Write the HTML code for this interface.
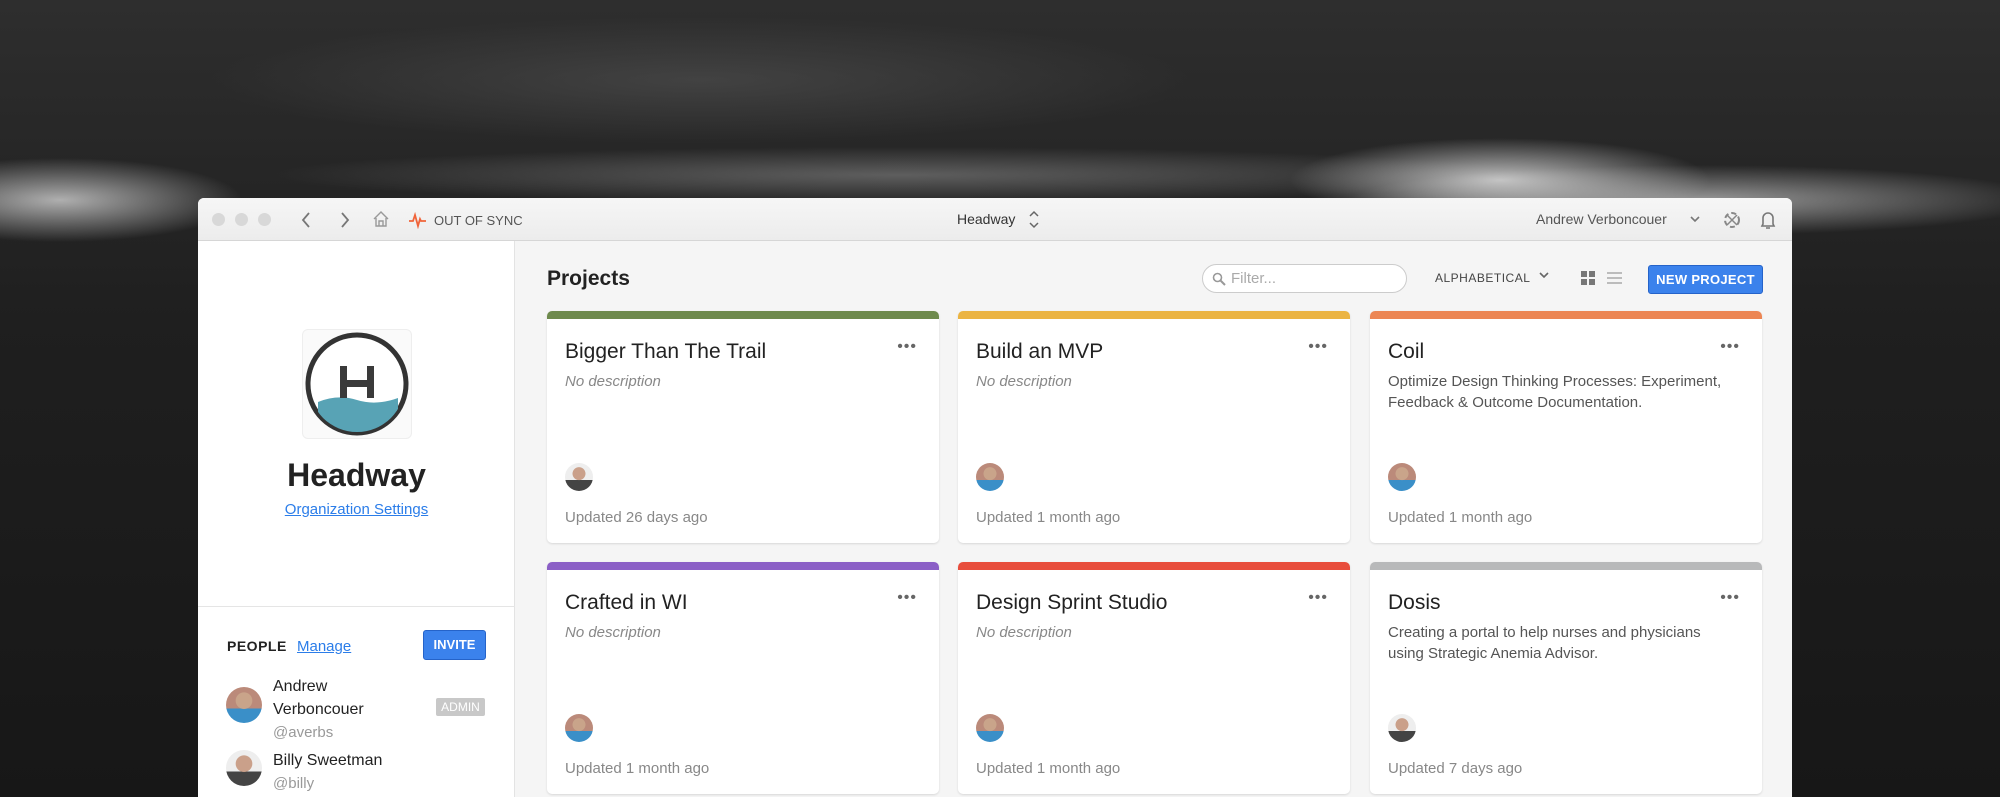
<!DOCTYPE html>
<html style="width:2000px;height:797px;overflow:hidden"><head><meta charset="utf-8"><style>
*{box-sizing:border-box;margin:0;padding:0}
body{width:2000px;height:797px;overflow:hidden;font-family:"Liberation Sans",sans-serif;position:relative;
background:
radial-gradient(ellipse 300px 60px at 1500px 180px,rgba(220,220,220,.85),transparent 70%),
radial-gradient(ellipse 500px 50px at 1700px 200px,rgba(200,200,200,.7),transparent 70%),
radial-gradient(ellipse 260px 60px at 60px 200px,rgba(210,210,210,.8),transparent 70%),
radial-gradient(ellipse 900px 40px at 900px 175px,rgba(150,150,150,.5),transparent 70%),
radial-gradient(ellipse 700px 90px at 700px 80px,rgba(90,90,90,.5),transparent 70%),
linear-gradient(#2e2e2e,#1f1f1f 40%,#171717);}
.a{position:absolute}
.win{left:198px;top:198px;width:1594px;height:599px;background:#f5f5f5;border-radius:6px 6px 0 0;overflow:hidden}
.tb{left:0;top:0;width:100%;height:43px;background:linear-gradient(#f6f6f6,#ececec);border-bottom:1px solid #d6d6d6}
.tl{width:13px;height:13px;border-radius:50%;background:#d8d8d8;top:15px}
.tbt{font-size:14px;color:#444;top:13px}
.side{left:0;top:43px;width:317px;height:556px;background:#fff;border-right:1px solid #e3e3e3}
.card{width:392px;background:#fff;border-radius:5px;box-shadow:0 1px 2px rgba(0,0,0,.12);overflow:hidden}
.bar{height:8px}
.ct{left:18px;top:29px;font-size:21px;color:#222}
.cd{left:18px;top:62px;font-size:15px;color:#888;font-style:italic}
.cdn{left:18px;top:60px;font-size:15px;color:#555;line-height:21px;width:350px}
.dots{right:22px;top:27px;font-size:16px;color:#666;letter-spacing:1px}
.av{left:18px;top:152px;width:28px;height:28px;border-radius:50%;background:radial-gradient(circle at 50% 38%,#c9a48a 0 28%,transparent 30%),linear-gradient(#bb8a7a 60%,#3a8fc8 60%)}
.av2{background:radial-gradient(circle at 50% 38%,#caa08a 0 28%,transparent 30%),linear-gradient(#eee 60%,#444 60%)}
.up{left:18px;top:198px;font-size:15px;color:#888}
</style></head><body>
<div class="a win">
 <div class="a tb">
  <div class="a tl" style="left:14px"></div><div class="a tl" style="left:37px"></div><div class="a tl" style="left:60px"></div>
  <svg class="a" style="left:102px;top:13px" width="60" height="18"><path d="M9 2 3 9l6 7M42 2l6 7-6 7" stroke="#777" stroke-width="1.8" fill="none"/></svg>
  <svg class="a" style="left:174px;top:12px" width="18" height="18"><path d="M2 9 9 2l7 7M4 8v8h10V8M7 16v-5h4v5" stroke="#999" stroke-width="1.4" fill="none"/></svg>
  <svg class="a" style="left:210px;top:13px" width="20" height="18"><path d="M1 10h4l2-6 3 11 2-7 1 2h5" stroke="#f0643a" stroke-width="1.8" fill="none"/></svg>
  <div class="a tbt" style="left:236px;font-size:13px;color:#555;top:15px">OUT OF SYNC</div>
  <div class="a tbt" style="left:759px;color:#333">Headway</div>
  <svg class="a" style="left:830px;top:11px" width="12" height="22"><path d="M2 7l4-4 4 4M2 14l4 4 4-4" stroke="#666" stroke-width="1.5" fill="none"/></svg>
  <div class="a tbt" style="left:1338px;color:#555">Andrew Verboncouer</div>
  <svg class="a" style="left:1491px;top:17px" width="12" height="10"><path d="M2 2l4 4 4-4" stroke="#777" stroke-width="1.6" fill="none"/></svg>
  <svg class="a" style="left:1524px;top:12px" width="20" height="20"><circle cx="10" cy="10" r="7" stroke="#888" stroke-width="2" fill="none" stroke-dasharray="5 3"/><path d="M5 5l10 10M15 5 5 15" stroke="#888" stroke-width="1.5"/></svg>
  <svg class="a" style="left:1562px;top:11px" width="16" height="22"><path d="M3 15V9a5 5 0 0 1 10 0v6l1 2H2z M6 19h4" stroke="#777" stroke-width="1.6" fill="none"/></svg>
 </div>
 <div class="a side">
  <div class="a" style="left:104px;top:88px;width:110px;height:110px;border:1px solid #eee;border-radius:6px;background:#fafafa">
   <svg width="108" height="108"><defs><clipPath id="c"><circle cx="54" cy="54" r="48"/></clipPath></defs><circle cx="54" cy="54" r="49" fill="#fff" stroke="#333" stroke-width="5"/><path clip-path="url(#c)" d="M15 72 Q35 64 54 70 T95 68 L95 110 15 110z" fill="#58a3b5"/><path d="M37 36h7v14h20V36h7v32h-7V57H44v11h-7z" fill="#3a3a3a"/></svg>
  </div>
  <div class="a" style="left:0;width:317px;text-align:center;top:216px;font-size:32px;font-weight:bold;color:#222">Headway</div>
  <div class="a" style="left:0;width:317px;text-align:center;top:260px;font-size:15px;color:#2b7de9;text-decoration:underline">Organization Settings</div>
  <div class="a" style="left:0;top:365px;width:317px;border-top:1px solid #e5e5e5"></div>
  <div class="a" style="left:29px;top:397px;font-size:14px;font-weight:bold;color:#222;letter-spacing:.5px">PEOPLE</div>
  <div class="a" style="left:99px;top:397px;font-size:15px;color:#2b7de9;text-decoration:underline">Manage</div>
  <div class="a" style="left:225px;top:389px;width:63px;height:30px;background:#3b82ec;border:1px solid #2563c9;border-radius:3px;color:#fff;font-size:13px;font-weight:bold;text-align:center;line-height:28px">INVITE</div>
  <div class="a av" style="left:28px;top:446px;width:36px;height:36px"></div>
  <div class="a" style="left:75px;top:434px;font-size:16px;color:#222;line-height:23px">Andrew<br>Verboncouer<br><span style="color:#999;font-size:15px">@averbs</span></div>
  <div class="a" style="left:238px;top:457px;width:49px;height:18px;background:#c8c8c8;border-radius:2px;color:#fff;font-size:12px;text-align:center;line-height:18px">ADMIN</div>
  <div class="a av av2" style="left:28px;top:509px;width:36px;height:36px"></div>
  <div class="a" style="left:75px;top:508px;font-size:16px;color:#222;line-height:23px">Billy Sweetman<br><span style="color:#999;font-size:15px">@billy</span></div>
 </div>
 <div class="a" style="left:349px;top:69px;font-size:21px;font-weight:bold;color:#222">Projects</div>
 <div class="a" style="left:1004px;top:66px;width:205px;height:29px;border:1px solid #ccc;border-radius:15px;background:#fff"><svg class="a" style="left:9px;top:7px" width="14" height="14"><circle cx="5.5" cy="5.5" r="4" stroke="#999" stroke-width="1.6" fill="none"/><path d="M8.5 8.5 13 13" stroke="#999" stroke-width="2"/></svg><span class="a" style="left:28px;top:5px;font-size:15px;color:#aaa">Filter...</span></div>
 <div class="a" style="left:1237px;top:73px;font-size:12px;color:#444;letter-spacing:.5px">ALPHABETICAL</div>
 <svg class="a" style="left:1340px;top:73px" width="12" height="10"><path d="M2 2l4 4 4-4" stroke="#666" stroke-width="1.6" fill="none"/></svg>
 <svg class="a" style="left:1383px;top:73px" width="46" height="16"><rect x="0" y="0" width="6" height="6" fill="#777"/><rect x="8" y="0" width="6" height="6" fill="#777"/><rect x="0" y="8" width="6" height="6" fill="#777"/><rect x="8" y="8" width="6" height="6" fill="#777"/><path d="M26 2h15M26 7h15M26 12h15" stroke="#aaa" stroke-width="1.6"/></svg>
 <div class="a" style="left:1450px;top:67px;width:115px;height:29px;background:#3b82ec;border:1px solid #2563c9;border-radius:3px;color:#fff;font-size:13px;font-weight:bold;text-align:center;line-height:27px;letter-spacing:.3px">NEW PROJECT</div>

 <div class="a card" style="left:349px;top:113px;height:232px"><div class="bar" style="background:#6e8a4d"></div><div class="a ct">Bigger Than The Trail</div><div class="a dots">•••</div><div class="a cd">No description</div><div class="a av av2"></div><div class="a up">Updated 26 days ago</div></div>
 <div class="a card" style="left:760px;top:113px;height:232px"><div class="bar" style="background:#ebb443"></div><div class="a ct">Build an MVP</div><div class="a dots">•••</div><div class="a cd">No description</div><div class="a av"></div><div class="a up">Updated 1 month ago</div></div>
 <div class="a card" style="left:1172px;top:113px;height:232px"><div class="bar" style="background:#ec8654"></div><div class="a ct">Coil</div><div class="a dots">•••</div><div class="a cdn">Optimize Design Thinking Processes: Experiment, Feedback &amp; Outcome Documentation.</div><div class="a av"></div><div class="a up">Updated 1 month ago</div></div>

 <div class="a card" style="left:349px;top:364px;height:232px"><div class="bar" style="background:#8b5fc6"></div><div class="a ct">Crafted in WI</div><div class="a dots">•••</div><div class="a cd">No description</div><div class="a av"></div><div class="a up">Updated 1 month ago</div></div>
 <div class="a card" style="left:760px;top:364px;height:232px"><div class="bar" style="background:#e84d3c"></div><div class="a ct">Design Sprint Studio</div><div class="a dots">•••</div><div class="a cd">No description</div><div class="a av"></div><div class="a up">Updated 1 month ago</div></div>
 <div class="a card" style="left:1172px;top:364px;height:232px"><div class="bar" style="background:#b8b9ba"></div><div class="a ct">Dosis</div><div class="a dots">•••</div><div class="a cdn" style="width:340px">Creating a portal to help nurses and physicians using Strategic Anemia Advisor.</div><div class="a av av2"></div><div class="a up">Updated 7 days ago</div></div>
</div>
</body></html>
